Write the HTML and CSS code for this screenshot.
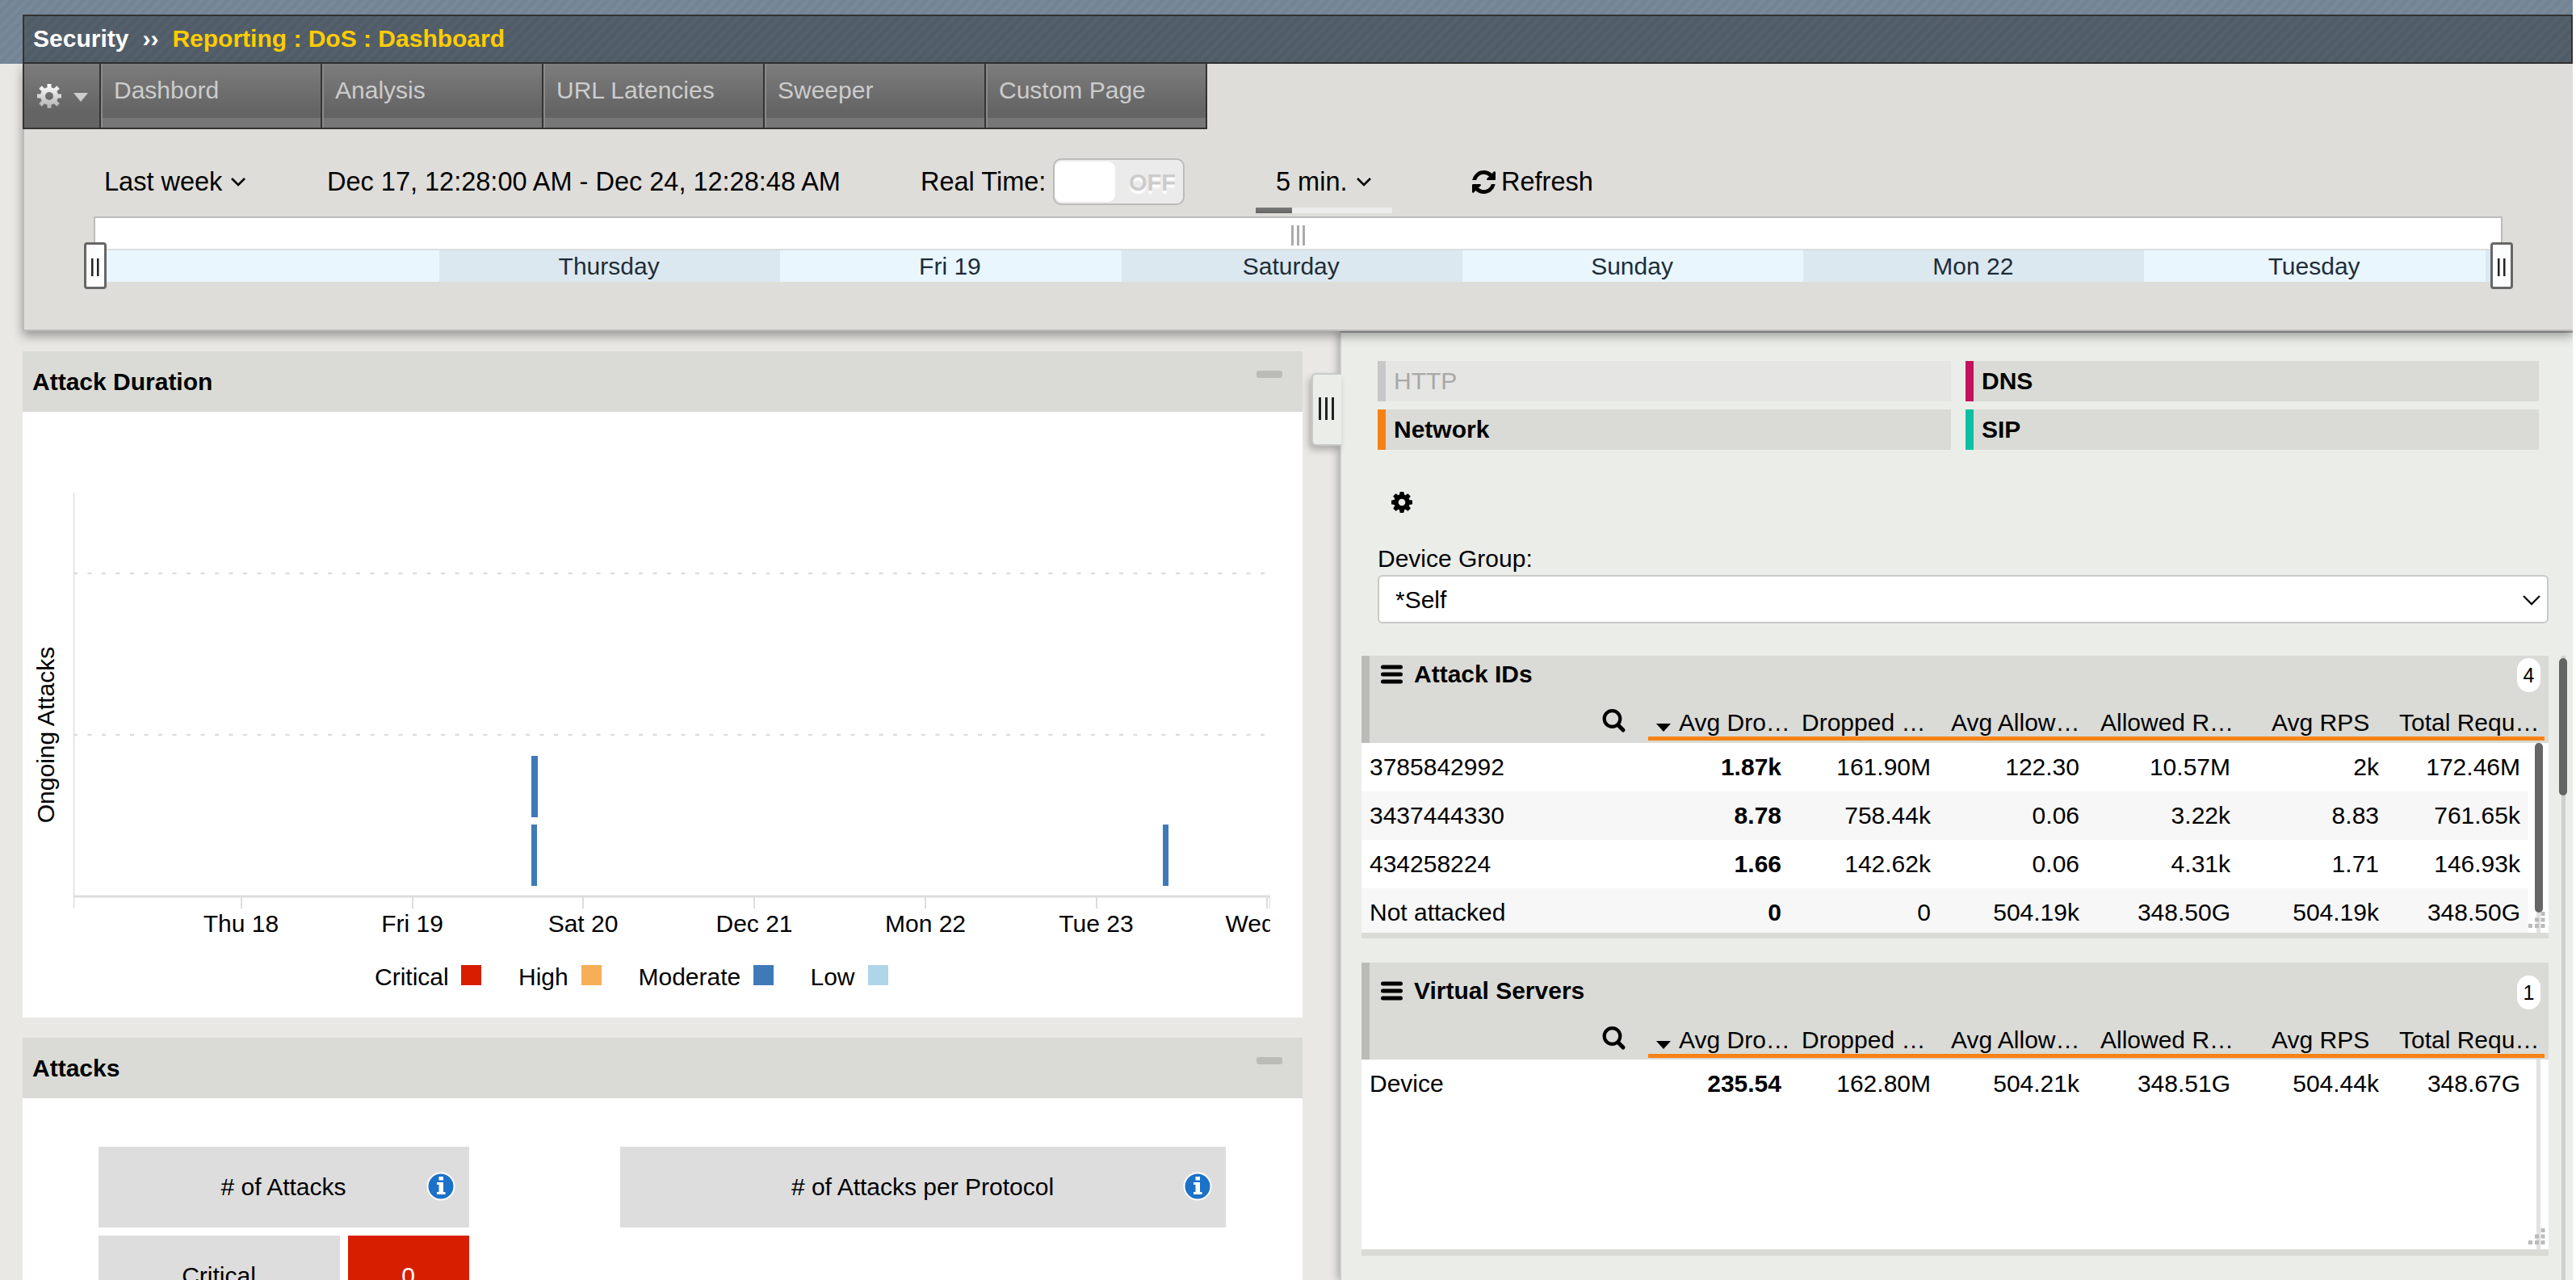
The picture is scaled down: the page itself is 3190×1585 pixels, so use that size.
FILE: index.html
```html
<!DOCTYPE html>
<html lang="en">
<head>
    <meta charset="UTF-8">
    <title>Reporting : DoS : Dashboard</title>
    <link rel="stylesheet" href="styles.css">
</head>
<body>
    <div class="page">
        <!-- Breadcrumb -->
        <header class="titlebar">
            <span>Security</span>
            <span class="arrows">››</span>
            <span class="crumb">Reporting : DoS : Dashboard</span>
        </header>

        <!-- Tabs, time controls and timeline -->
        <section class="top">
            <nav class="tabs">
                <div class="tab-gear">
                    <svg width="32" height="32" viewBox="-16 -16 32 32">
                        <defs>
                            <linearGradient id="gearFill" gradientUnits="userSpaceOnUse" x1="0" y1="-15" x2="0" y2="15">
                                <stop offset="0" stop-color="#fff"/>
                                <stop offset="1" stop-color="#b0b0b0"/>
                            </linearGradient>
                        </defs>
                        <g stroke="url(#gearFill)" fill="none">
                            <circle r="8" stroke-width="6"/>
                            <path stroke-width="5" d="M0.01 -15V-9M0.01 9V15M-15 0.01H-9M9 0.01H15M-11 -11L-7 -7M7 7L11 11M-11 11L-7 7M7 -7L11 -11"/>
                        </g>
                    </svg>
                    <svg class="caret" width="18" height="12" viewBox="0 0 18 12"><path fill="#ccc" d="M0 0H18L9 11Z"/></svg>
                </div>
                <a class="tab">Dashbord</a>
                <a class="tab">Analysis</a>
                <a class="tab">URL Latencies</a>
                <a class="tab">Sweeper</a>
                <a class="tab">Custom Page</a>
            </nav>

            <div class="controls">
                <div class="period">Last week
                    <svg width="20" height="12" viewBox="0 0 20 12"><path fill="none" stroke="#000" stroke-width="2.6" d="M2 2L10 10L18 2"/></svg>
                </div>
                <div class="range">Dec 17, 12:28:00 AM - Dec 24, 12:28:48 AM</div>
                <div class="realtime">Real Time:</div>
                <div class="toggle"><span class="knob"></span><span class="off">OFF</span></div>
                <div class="interval">
                    <div>5 min.
                        <svg width="20" height="12" viewBox="0 0 20 12"><path fill="none" stroke="#000" stroke-width="2.6" d="M2 2L10 10L18 2"/></svg>
                    </div>
                    <div class="progress"><span></span></div>
                </div>
                <div class="refresh">
                    <svg width="29" height="29" viewBox="128 128 1536 1536"><path d="M1639 1056q0 5-1 7-64 268-268 434.500t-478 166.500q-146 0-282.500-55t-243.500-157l-129 129q-19 19-45 19t-45-19-19-45v-448q0-26 19-45t45-19h448q26 0 45 19t19 45-19 45l-137 137q71 66 161 102t187 36q134 0 250-65t186-179q11-17 53-117 8-23 30-23h192q13 0 22.500 9.500t9.500 22.500zm25-800v448q0 26-19 45t-45 19h-448q-26 0-45-19t-19-45 19-45l138-138q-148-137-349-137-134 0-250 65t-186 179q-11 17-53 117-8 23-30 23h-199q-13 0-22.500-9.500t-9.500-22.500v-7q65-268 270-434.500t480-166.500q146 0 284 55.500t245 156.500l130-129q19-19 45-19t45 19 19 45z"/></svg>
                    <span>Refresh</span>
                </div>
            </div>

            <div class="timeline">
                <div class="overview"><span class="grip"></span></div>
                <div class="days">
                    <div></div>
                    <div>Thursday</div>
                    <div>Fri 19</div>
                    <div>Saturday</div>
                    <div>Sunday</div>
                    <div>Mon 22</div>
                    <div>Tuesday</div>
                    <div></div>
                </div>
                <span class="handle start"></span>
                <span class="handle end"></span>
            </div>
        </section>

        <main class="main">
            <!-- Left column -->
            <div class="left">
                <section class="widget">
                    <h2>Attack Duration<span class="minus"></span></h2>
                    <svg class="chart" width="1585" height="750" viewBox="28 510 1585 750">
                        <clipPath id="plot"><rect x="28" y="510" width="1545" height="750"/></clipPath>
                        <g stroke="#ddd" stroke-width="2" fill="none">
                            <path stroke-width="1.5" d="M91.5 610V1125"/>
                            <path stroke-width="2.5" stroke-dasharray="5 12.500" d="M91 710H1570M91 910H1570"/>
                            <path stroke-width="3" d="M91 1110H1573"/>
                            <path d="M299 1110V1125M511 1110V1125M722 1110V1125M934 1110V1125M1146 1110V1125M1358 1110V1125M1569 1110V1125"/>
                            <path stroke-width="1" d="M1572.500 1110V1125"/>
                        </g>
                        <g fill="#3f7ab8">
                            <rect x="658" y="936" width="8" height="76"/>
                            <rect x="658" y="1021" width="7" height="76"/>
                            <rect x="1440" y="1021" width="7" height="76"/>
                        </g>
                        <g text-anchor="middle" clip-path="url(#plot)">
                            <text x="298.500" y="1154">Thu 18</text>
                            <text x="510.500" y="1154">Fri 19</text>
                            <text x="722" y="1154">Sat 20</text>
                            <text x="934" y="1154">Dec 21</text>
                            <text x="1146" y="1154">Mon 22</text>
                            <text x="1357.500" y="1154">Tue 23</text>
                            <text x="1569" y="1154">Wed 24</text>
                        </g>
                        <text text-anchor="middle" transform="translate(67 910) rotate(-90)">Ongoing Attacks</text>
                        <text x="464" y="1219.500">Critical</text>
                        <rect x="571" y="1195" width="25" height="25" fill="#d81e00"/>
                        <text x="642" y="1219.500">High</text>
                        <rect x="720" y="1195" width="25" height="25" fill="#f6ae57"/>
                        <text x="790.500" y="1219.500">Moderate</text>
                        <rect x="933" y="1195" width="25" height="25" fill="#3f7ab8"/>
                        <text x="1003.500" y="1219.500">Low</text>
                        <rect x="1075" y="1195" width="25" height="25" fill="#afd5e8"/>
                    </svg>
                </section>

                <section class="widget">
                    <h2>Attacks<span class="minus"></span></h2>
                    <div class="attacks">
                        <div class="counts">
                            <div class="box wide"># of Attacks
                                <svg class="info" width="36" height="36" viewBox="-18 -18 36 36"><circle r="17.500" fill="#fff"/><circle r="15.500" fill="#1b72c8"/><path fill="#fff" d="M-2.500 -12H3V-7.500H-2.500ZM-5 -5H3V7H5.500V10H-5V7H-2.500V-2H-5Z"/></svg>
                            </div>
                            <div class="box">Critical</div>
                            <div class="box critical">0</div>
                        </div>
                        <div class="box protocols-box"># of Attacks per Protocol
                            <svg class="info" width="36" height="36" viewBox="-18 -18 36 36"><circle r="17.500" fill="#fff"/><circle r="15.500" fill="#1b72c8"/><path fill="#fff" d="M-2.500 -12H3V-7.500H-2.500ZM-5 -5H3V7H5.500V10H-5V7H-2.500V-2H-5Z"/></svg>
                        </div>
                    </div>
                </section>
            </div>

            <!-- Dimensions pane -->
            <aside class="pane">
                <div class="pane-tab"><span></span><span></span><span></span></div>
                <div class="protocols">
                    <div class="proto disabled">HTTP</div>
                    <div class="proto dns">DNS</div>
                    <div class="proto network">Network</div>
                    <div class="proto sip">SIP</div>
                </div>
                <svg class="settings" width="26" height="26" viewBox="0 0 1536 1536"><path fill-rule="evenodd" d="M1024 768q0-106-75-181t-181-75-181 75-75 181 75 181 181 75 181-75 75-181zm512-109v222q0 12-8 23t-20 13l-185 28q-19 54-39 91 35 50 107 138 10 12 10 25t-9 23q-27 37-99 108t-94 71q-12 0-26-9l-138-108q-44 23-91 38-16 136-29 186-7 28-36 28h-222q-14 0-24.500-8.500t-11.500-21.500l-28-184q-49-16-90-37l-141 107q-10 9-25 9-14 0-25-11-126-114-165-168-7-10-7-23 0-12 8-23 15-21 51-66.500t54-70.500q-27-50-41-99l-183-27q-13-2-21-12.500t-8-23.500v-222q0-12 8-23t19-13l186-28q14-46 39-92-40-57-107-138-10-12-10-24 0-10 9-23 26-36 98.500-107.500t94.500-71.500q13 0 26 10l138 107q44-23 91-38 16-136 29-186 7-28 36-28h222q14 0 24.500 8.500t11.500 21.500l28 184q49 16 90 37l142-107q9-9 24-9 13 0 25 10 129 119 165 170 7 8 7 22 0 12-8 23-15 21-51 66.500t-54 70.500q26 50 41 98l183 28q13 2 21 12.500t8 23.500z"/></svg>
                <label class="group-label">Device Group:</label>
                <div class="select">*Self
                    <svg width="24" height="14" viewBox="0 0 24 14"><path fill="none" stroke="#111" stroke-width="2.400" d="M2 2L12 12L22 2"/></svg>
                </div>

                <div class="scroll-area">
                    <div class="tables">
                        <section class="dim">
                            <div class="dim-head">
                                <div class="dim-title">
                                    <svg width="27" height="24" viewBox="0 0 27 24"><path stroke="#000" stroke-width="5" stroke-linecap="round" d="M2.500 3H24.500M2.500 12H24.500M2.500 21H24.500"/></svg>
                                    Attack IDs
                                </div>
                                <span class="badge">4</span>
                                <div class="dim-cols">
                                    <svg class="search" width="30" height="30" viewBox="0 0 30 30"><g fill="none" stroke="#000"><circle cx="12.500" cy="12" r="9.800" stroke-width="4.200"/><path stroke-width="5" stroke-linecap="round" d="M20 20L26 26"/></g></svg>
                                    <svg class="sort" width="18" height="10" viewBox="0 0 18 10"><path d="M0 0H18L9 10Z"/></svg>
                                    <span>Avg Dro…</span>
                                    <span>Dropped …</span>
                                    <span>Avg Allow…</span>
                                    <span>Allowed R…</span>
                                    <span>Avg RPS</span>
                                    <span>Total Requ…</span>
                                </div>
                            </div>
                            <div class="dim-body">
                                <div class="row"><span>3785842992</span><b>1.87k</b><span>161.90M</span><span>122.30</span><span>10.57M</span><span>2k</span><span>172.46M</span></div>
                                <div class="row"><span>3437444330</span><b>8.78</b><span>758.44k</span><span>0.06</span><span>3.22k</span><span>8.83</span><span>761.65k</span></div>
                                <div class="row"><span>434258224</span><b>1.66</b><span>142.62k</span><span>0.06</span><span>4.31k</span><span>1.71</span><span>146.93k</span></div>
                                <div class="row"><span>Not attacked</span><b>0</b><span>0</span><span>504.19k</span><span>348.50G</span><span>504.19k</span><span>348.50G</span></div>
                                <span class="track"><i class="thumb"></i></span>
                                <svg class="resize" width="21" height="21" viewBox="0 0 21 21"><path fill="#bbb" d="M15.500 0h5v5h-5zM8 7.500h5v5h-5zM15.500 7.500h5v5h-5zM0 15h5v5h-5zM8 15h5v5h-5zM15.500 15h5v5h-5z"/></svg>
                            </div>
                        </section>

                        <section class="dim second">
                            <div class="dim-head">
                                <div class="dim-title">
                                    <svg width="27" height="24" viewBox="0 0 27 24"><path stroke="#000" stroke-width="5" stroke-linecap="round" d="M2.500 3H24.500M2.500 12H24.500M2.500 21H24.500"/></svg>
                                    Virtual Servers
                                </div>
                                <span class="badge">1</span>
                                <div class="dim-cols">
                                    <svg class="search" width="30" height="30" viewBox="0 0 30 30"><g fill="none" stroke="#000"><circle cx="12.500" cy="12" r="9.800" stroke-width="4.200"/><path stroke-width="5" stroke-linecap="round" d="M20 20L26 26"/></g></svg>
                                    <svg class="sort" width="18" height="10" viewBox="0 0 18 10"><path d="M0 0H18L9 10Z"/></svg>
                                    <span>Avg Dro…</span>
                                    <span>Dropped …</span>
                                    <span>Avg Allow…</span>
                                    <span>Allowed R…</span>
                                    <span>Avg RPS</span>
                                    <span>Total Requ…</span>
                                </div>
                            </div>
                            <div class="dim-body">
                                <div class="row"><span>Device</span><b>235.54</b><span>162.80M</span><span>504.21k</span><span>348.51G</span><span>504.44k</span><span>348.67G</span></div>
                                <span class="track"></span>
                                <svg class="resize" width="21" height="21" viewBox="0 0 21 21"><path fill="#bbb" d="M15.500 0h5v5h-5zM8 7.500h5v5h-5zM15.500 7.500h5v5h-5zM0 15h5v5h-5zM8 15h5v5h-5zM15.500 15h5v5h-5z"/></svg>
                            </div>
                        </section>
                    </div>
                    <div class="pane-track"><span></span></div>
                </div>
            </aside>
        </main>
    </div>
</body>
</html>
```
FILE: styles.css
```css
* {
    box-sizing: border-box;
}
html {
    background: #fff;
    overflow: hidden;
}
body {
    margin: 0;
    font-family: Arial, "Liberation Sans", sans-serif;
    font-size: 30px;
    line-height: 34px;
    color: #000;
}
svg {
    display: block;
    flex: none;
}
.page {
    width: 3186px;
    height: 1585px;
    overflow: hidden;
    padding-top: 18px;
    background:
        repeating-linear-gradient(135deg, #738494 0 3px, #788999 5px 7px, #738494 9px) 0 0 / 100% 79px no-repeat,
        #e9e8e4;
}

/* Breadcrumb */
.titlebar {
    display: flex;
    margin-left: 28px;
    height: 61px;
    padding-left: 11px;
    border: 2px solid #333;
    background: repeating-linear-gradient(135deg, #505c68 0 3px, #55606a 5px 7px, #505c68 9px);
    color: #fff;
    font-weight: bold;
    line-height: 56px;
}
.arrows {
    width: 54px;
    text-align: center;
}
.crumb {
    color: #fc0;
}

/* Top section */
.top {
    position: relative;
    z-index: 2;
    margin-left: 28px;
    height: 331px;
    border-left: 2px solid #bbb;
    border-bottom: 2px solid #bcbcbc;
    background: #dfddd9;
    box-shadow: 0 6px 12px rgba(0, 0, 0, 0.35);
}
.tabs {
    display: flex;
    height: 81px;
    width: 1467px;
    margin-left: -2px;
    border: 2px solid #333;
    border-top: 0;
    background: linear-gradient(#7d7d7d, #646464 75%);
}
.tab-gear {
    display: flex;
    align-items: center;
    gap: 14px;
    width: 95px;
    padding-left: 15px;
    border-right: 2px solid #333;
}
.caret {
    margin-top: 4px;
}
.tab {
    width: 274px;
    padding: 16px 0 0 14px;
    border-left: 2px solid #8a8a8a;
    border-right: 2px solid #333;
    background: linear-gradient(#777, #777) 0 67px / 100% 12px no-repeat;
    color: #ccc;
}
.tab:last-child {
    width: 272px;
    border-right: 0;
}

.controls {
    display: flex;
    height: 108px;
    padding: 36px 0 0 99px;
    font-size: 32.5px;
    line-height: 58px;
}
.controls > div {
    flex: none;
}
.period,
.interval > div:first-child,
.refresh {
    display: flex;
    align-items: center;
    height: 58px;
}
.period {
    gap: 10px;
    width: 276px;
}
.range {
    width: 735px;
}
.realtime {
    width: 164px;
}
.toggle {
    display: flex;
    width: 163px;
    height: 58px;
    margin-right: 88px;
    border: 2px solid #bbb;
    border-radius: 10px;
    background: #ebebeb;
}
.knob {
    width: 75px;
    height: 50px;
    margin-top: 2px;
    border-radius: 9px;
    background: #fff;
}
.off {
    margin-left: 17px;
    font-size: 29px;
    font-weight: bold;
    line-height: 56px;
    color: #ccc;
    text-shadow: 0 4px 2px #fff;
}
.interval {
    width: 268px;
}
.interval > div:first-child {
    gap: 10px;
    padding-left: 25px;
}
.progress {
    width: 169px;
    height: 7px;
    margin-top: 3px;
    background: #ececec;
}
.progress span {
    display: block;
    width: 45px;
    height: 7px;
    background: linear-gradient(#7b7b7b, #646464);
}
.refresh {
    gap: 7px;
}

/* Timeline */
.timeline {
    position: relative;
    width: 2983px;
    height: 80px;
    margin-left: 86px;
}
.overview {
    display: flex;
    justify-content: center;
    height: 42px;
    border: 2px solid #bbb;
    border-bottom-color: #ddd;
    background: #fff;
}
.grip {
    width: 18px;
    height: 25px;
    margin-top: 9px;
    background: repeating-linear-gradient(90deg, #aaa 0 3px, #fff 3px 7px);
}
.days {
    display: grid;
    grid-template-columns: 426px repeat(6, 422.300px) 1fr;
    height: 38px;
    margin-left: 2px;
    line-height: 39px;
    text-align: center;
    color: #1f2d38;
}
.days div {
    padding-right: 2px;
    background: #e9f6fe;
}
.days div:nth-child(even) {
    background: #dce8f0;
}
.handle {
    position: absolute;
    top: 32px;
    width: 28px;
    height: 58px;
    border: 3px solid #666;
    border-radius: 4px;
    background:
        linear-gradient(#222, #222) 6px 17px / 2.500px 22px no-repeat,
        linear-gradient(#222, #222) 13px 17px / 2.500px 22px no-repeat,
        rgba(255, 255, 255, 0.9);
}
.handle.start {
    left: -12px;
}
.handle.end {
    right: -13px;
}

/* Widgets */
.main {
    display: flex;
    height: 1175px;
}
.left {
    width: 1659px;
    padding: 25px 46px 0 28px;
}
.widget {
    margin-bottom: 25px;
    background: #fff;
}
.widget h2 {
    display: flex;
    justify-content: space-between;
    height: 75px;
    margin: 0;
    padding: 0 25px 0 12px;
    background: #dadbd6;
    font-size: 30px;
    line-height: 75px;
}
.minus {
    width: 32px;
    height: 9px;
    margin-top: 24px;
    border-radius: 3px;
    background: #bbbcb7;
}
.attacks {
    display: flex;
    height: 300px;
    padding: 60px 0 0 94px;
}
.counts {
    display: grid;
    grid-template-columns: 299px 150px;
    grid-template-rows: 100px 100px;
    gap: 10px;
    width: 459px;
    margin-right: 187px;
}
.box {
    position: relative;
    height: 100px;
    padding-right: 1px;
    background: #ddd;
    line-height: 100px;
    text-align: center;
}
.wide {
    grid-column: span 2;
}
.critical {
    background: #d81e00;
    color: #fff;
}
.protocols-box {
    width: 750px;
}
.info {
    position: absolute;
    top: 31px;
    right: 17px;
}

/* Right pane */
.pane {
    position: relative;
    width: 1527px;
    padding: 35px 0 0 45px;
    border-left: 2px solid #ccc;
    border-top: 2px solid #aaa;
    background: #ebede8;
    box-shadow: -2px 0 10px rgba(0, 0, 0, 0.3);
}
.pane-tab {
    position: absolute;
    left: -37px;
    top: 50px;
    display: flex;
    gap: 5px;
    width: 37px;
    height: 90px;
    padding: 28px 0 0 7px;
    border: 2px solid #c8cac7;
    border-right: 0;
    border-radius: 6px 0 0 6px;
    background: #ebede8;
    box-shadow: -3px 5px 8px rgba(0, 0, 0, 0.25);
}
.pane-tab span {
    width: 3px;
    height: 28px;
    background: #222;
}
.protocols {
    display: grid;
    grid-template-columns: 710px 710px;
    gap: 10px 18px;
}
.proto {
    height: 50px;
    padding-left: 10px;
    border-left: 10px solid #f68216;
    background: #dadbd6;
    font-weight: bold;
    line-height: 50px;
}
.disabled {
    border-color: #c8c8c8;
    background: #e5e6e3;
    color: #a8a8a8;
    font-weight: normal;
}
.dns {
    border-color: #c4125e;
}
.sip {
    border-color: #0dbfa2;
}
.settings {
    margin: 52px 0 0 17px;
}
.group-label {
    display: block;
    margin-top: 40px;
}
.select {
    display: flex;
    align-items: center;
    justify-content: space-between;
    width: 1450px;
    height: 60px;
    margin-top: 3px;
    padding: 1px 7px 0 20px;
    border: 2px solid #c8c8c8;
    border-radius: 6px;
    background: #fff;
}
.scroll-area {
    display: flex;
    height: 773px;
    margin: 40px 0 0 -20px;
}
.tables {
    width: 1470px;
    margin-right: 13px;
}
.pane-track {
    width: 10px;
    padding-top: 3px;
    background: linear-gradient(#cfd1cd, #cfd1cd) 3px 0 / 5px 100% no-repeat;
}
.pane-track span {
    display: block;
    height: 170px;
    border-radius: 5px;
    background: #646464;
}

/* Dimension tables */
.dim {
    margin-bottom: 30px;
    border-bottom: 7px solid #dadbd6;
}
.dim-head {
    position: relative;
    height: 108px;
    padding-top: 6px;
    border-left: 10px solid #bbbcb7;
    background: #dadbd6;
}
.dim-title {
    display: flex;
    align-items: center;
    gap: 14px;
    height: 34px;
    padding-left: 14px;
    font-weight: bold;
}
.badge {
    position: absolute;
    top: 3px;
    right: 10px;
    width: 29px;
    height: 42px;
    border-radius: 15px;
    background: #fff;
    font-size: 25px;
    line-height: 42px;
    text-align: center;
}
.dim-cols {
    display: grid;
    grid-template-columns: 67px 28px 152px 185px 185px 212px 158px 180px;
    width: 1455px;
    height: 39px;
    margin-top: 26px;
    padding-left: 288px;
    background: linear-gradient(#f68216, #f68216) right bottom / 1110px 5px no-repeat;
    white-space: nowrap;
}
.dim-cols .sort {
    margin-top: 18px;
}
.dim-body {
    position: relative;
    height: 235px;
    overflow: hidden;
    background: #fff;
}
.row {
    display: grid;
    grid-template-columns: 300px 221px 185px 184px 187px 184px 175px;
    width: 1445px;
    height: 60px;
    padding-left: 10px;
    line-height: 60px;
    text-align: right;
}
.row > :nth-child(n+2) {
    margin-right: 11px;
    margin-left: -11px;
}
.row > :first-child {
    text-align: left;
}
.row:nth-child(even) {
    background: #f7f7f7;
}
.track {
    position: absolute;
    top: 0;
    right: 7px;
    width: 10px;
    height: 235px;
    background: linear-gradient(#e2e2e2, #e2e2e2) 2px 0 / 5px 100% no-repeat;
}
.thumb {
    display: block;
    height: 210px;
    border-radius: 5px;
    background: #666;
}
.resize {
    position: absolute;
    right: 4px;
    bottom: 5px;
}
.second .dim-head {
    height: 120px;
    padding-top: 18px;
}
.second .dim-cols {
    margin-top: 27px;
}
.second .badge {
    top: 16px;
}
.second {
    border-bottom-width: 8px;
}
```
